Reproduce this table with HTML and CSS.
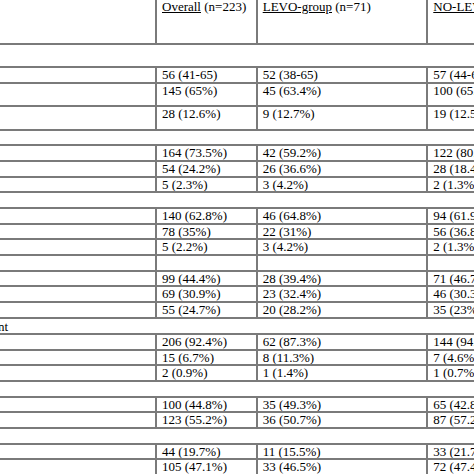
FILE: index.html
```html
<!DOCTYPE html>
<html>
<head>
<meta charset="utf-8">
<link rel="stylesheet" href="styles.css">
</head>
<body>
<div class="frame">
<table class="tbl">
<colgroup>
<col class="c1"><col class="c2"><col class="c3"><col class="c4">
</colgroup>
<tbody>
<tr class="head"><td></td><td><u>Overall</u> (n=223)</td><td><u>LEVO-group</u> (n=71)</td><td><u>NO-LEVO-group</u> (n=152)</td></tr>
<tr class="sec tall"><td colspan="4"></td></tr>
<tr><td></td><td>56 (41-65)</td><td>52 (38-65)</td><td>57 (44-65)</td></tr>
<tr class="tall"><td></td><td>145 (65%)</td><td>45 (63.4%)</td><td>100 (65.8%)</td></tr>
<tr class="tall"><td></td><td>28 (12.6%)</td><td>9 (12.7%)</td><td>19 (12.5%)</td></tr>
<tr class="sec"><td colspan="4"></td></tr>
<tr><td></td><td>164 (73.5%)</td><td>42 (59.2%)</td><td>122 (80.3%)</td></tr>
<tr><td></td><td>54 (24.2%)</td><td>26 (36.6%)</td><td>28 (18.4%)</td></tr>
<tr><td></td><td>5 (2.3%)</td><td>3 (4.2%)</td><td>2 (1.3%)</td></tr>
<tr class="sec"><td colspan="4"></td></tr>
<tr><td></td><td>140 (62.8%)</td><td>46 (64.8%)</td><td>94 (61.9%)</td></tr>
<tr><td></td><td>78 (35%)</td><td>22 (31%)</td><td>56 (36.8%)</td></tr>
<tr><td></td><td>5 (2.2%)</td><td>3 (4.2%)</td><td>2 (1.3%)</td></tr>
<tr><td></td><td></td><td></td><td></td></tr>
<tr><td></td><td>99 (44.4%)</td><td>28 (39.4%)</td><td>71 (46.7%)</td></tr>
<tr><td></td><td>69 (30.9%)</td><td>23 (32.4%)</td><td>46 (30.3%)</td></tr>
<tr><td></td><td>55 (24.7%)</td><td>20 (28.2%)</td><td>35 (23%)</td></tr>
<tr class="sec"><td colspan="4"><span class="cut">nt</span></td></tr>
<tr><td></td><td>206 (92.4%)</td><td>62 (87.3%)</td><td>144 (94.7%)</td></tr>
<tr><td></td><td>15 (6.7%)</td><td>8 (11.3%)</td><td>7 (4.6%)</td></tr>
<tr><td></td><td>2 (0.9%)</td><td>1 (1.4%)</td><td>1 (0.7%)</td></tr>
<tr class="sec"><td colspan="4"></td></tr>
<tr><td></td><td>100 (44.8%)</td><td>35 (49.3%)</td><td>65 (42.8%)</td></tr>
<tr><td></td><td>123 (55.2%)</td><td>36 (50.7%)</td><td>87 (57.2%)</td></tr>
<tr class="sec"><td colspan="4"></td></tr>
<tr><td></td><td>44 (19.7%)</td><td>11 (15.5%)</td><td>33 (21.7%)</td></tr>
<tr><td></td><td>105 (47.1%)</td><td>33 (46.5%)</td><td>72 (47.4%)</td></tr>
<tr><td></td><td>62 (27.8%)</td><td>24 (33.8%)</td><td>38 (25%)</td></tr>
</tbody>
</table>
</div>
</body>
</html>
```

FILE: styles.css
```css
html, body {
  margin: 0;
  padding: 0;
  background: #ffffff;
  overflow: hidden;
}

.frame {
  width: 474px;
  height: 474px;
  overflow: hidden;
  background: #ffffff;
}

.tbl {
  border-collapse: collapse;
  table-layout: fixed;
  width: 600px;
  margin-left: -11px;
  margin-top: -2px;
  font-family: "Liberation Serif", "Times New Roman", serif;
  font-size: 13px;
  line-height: 13.6px;
  color: #000000;
}

.c1 { width: 166px; }
.c2 { width: 100.7px; }
.c3 { width: 170.6px; }
.c4 { width: 162.7px; }

.tbl td {
  border: 2px solid #7a7a7a;
  padding: 0 0 0 5px;
  vertical-align: top;
  white-space: nowrap;
  overflow: hidden;
}

.tbl tr { height: 15.65px; }
.tbl tr.tall { height: 23.4px; }
.tbl tr.head { height: 46px; }

.tbl tr.head td {
  border-top: 0;
  padding-top: 2px;
}

.cut {
  display: inline-block;
  margin-left: 7px;
  padding-top: 1px;
}

.tbl tr.sec td { padding-left: 0; }
```
